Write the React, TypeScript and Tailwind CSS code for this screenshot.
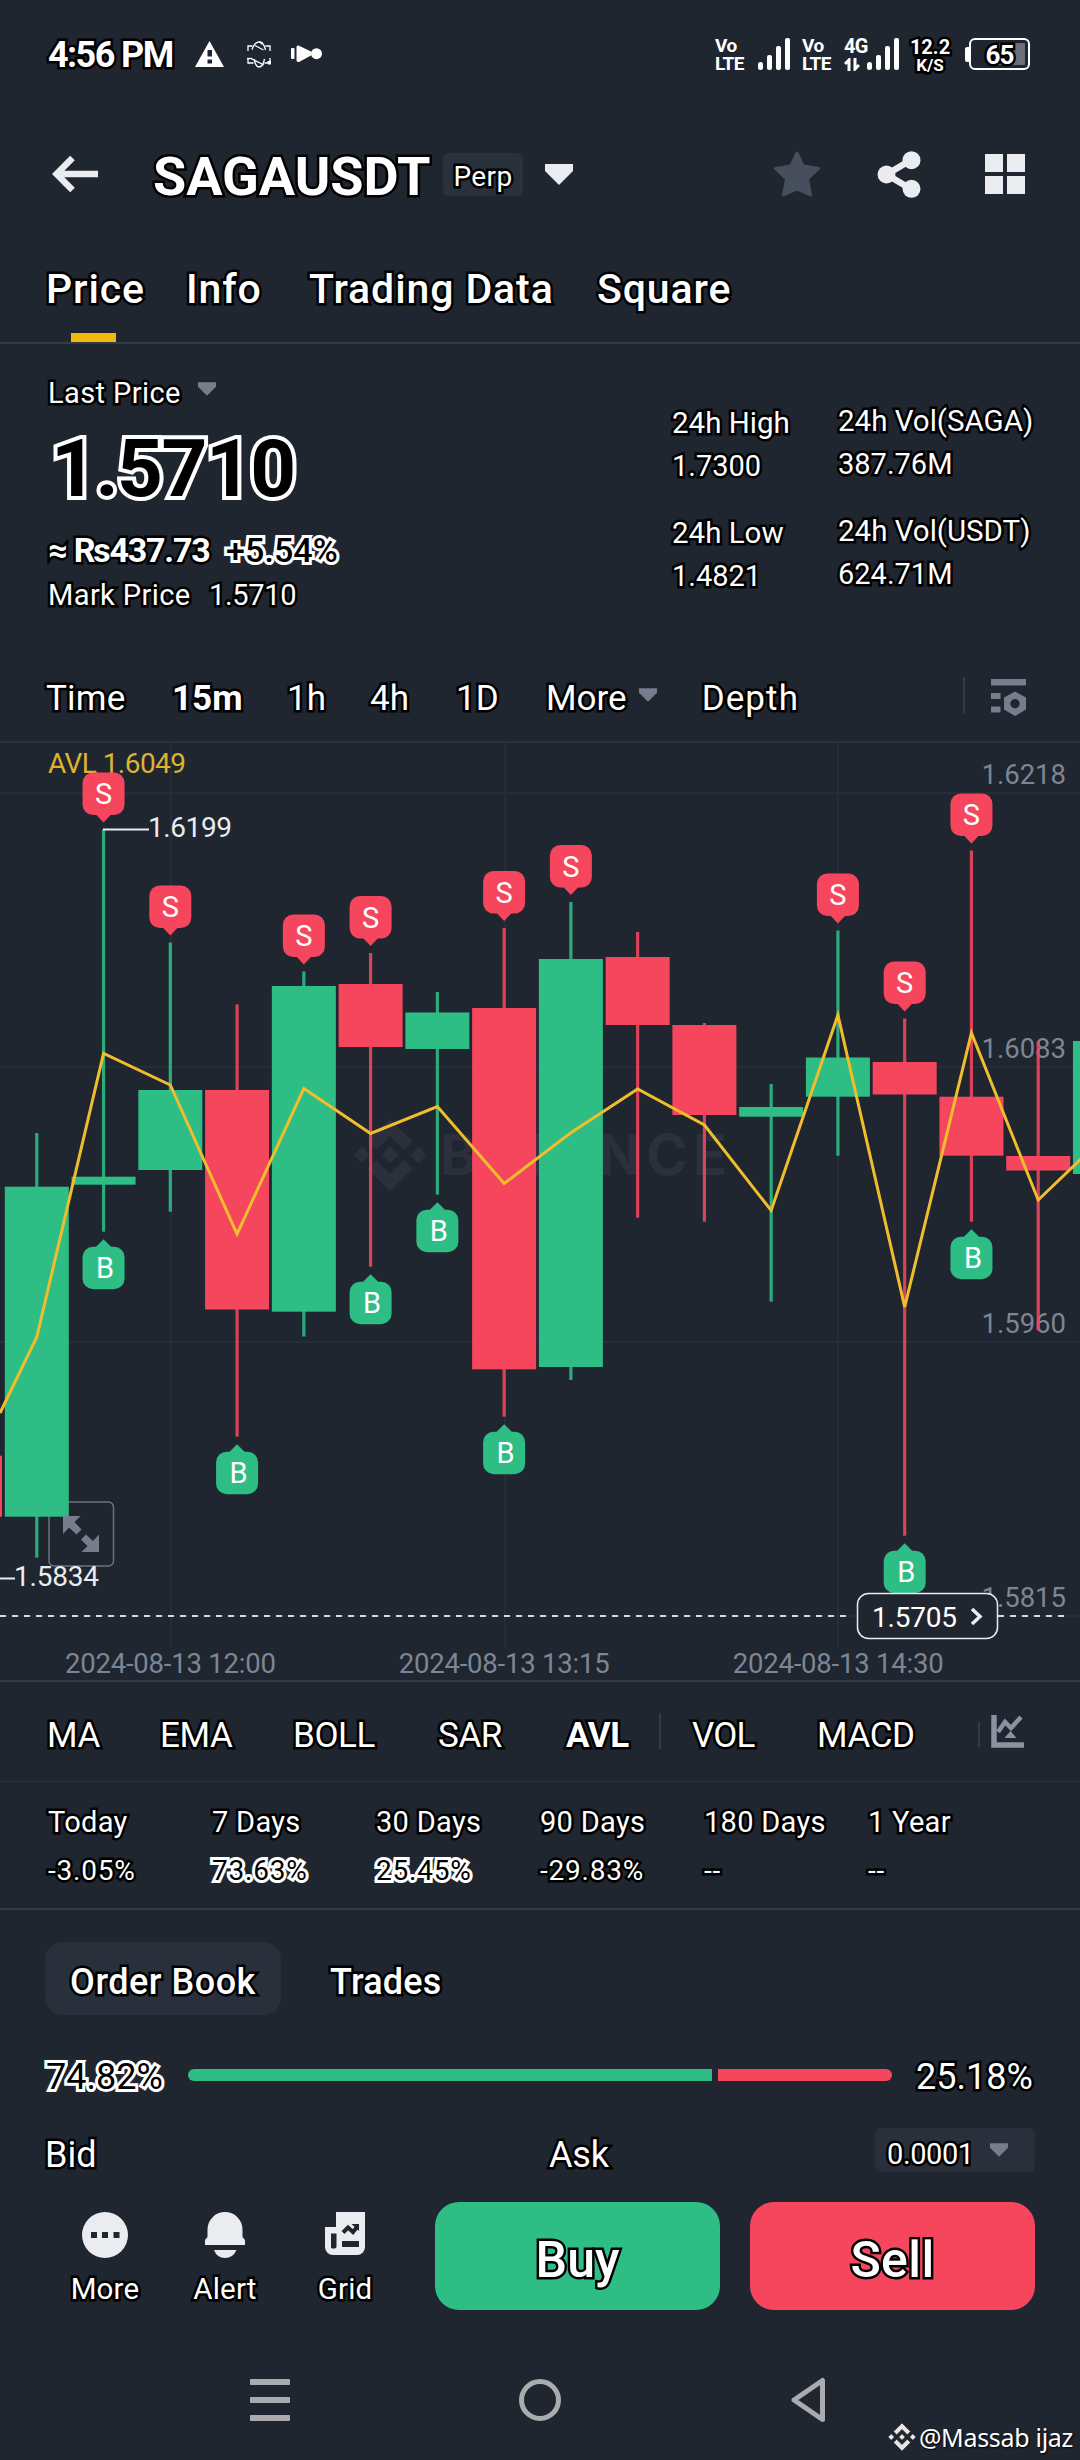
// src/pages/FuturesDetail.tsx
import { clsx } from "clsx";
import type { ReactNode } from "react";

type Candle = {
	high: number;
	top: number;
	bottom: number;
	low: number;
	up: boolean;
	sell?: boolean;
	buy?: boolean;
};

const GREEN = "#2ebd85";
const RED = "#f6465d";

const STEP = 66.76;
const FIRST_X = 36.8;

const candles: Candle[] = [
	{ high: 1133, top: 1186.7, bottom: 1516.7, low: 1557.7, up: true },
	{ high: 829.5, top: 1176.7, bottom: 1184.7, low: 1231.7, up: true, sell: true, buy: true },
	{ high: 942.5, top: 1090, bottom: 1170, low: 1211.7, up: true, sell: true },
	{ high: 1004.3, top: 1090, bottom: 1309.5, low: 1436.7, up: false, buy: true },
	{ high: 971.5, top: 986, bottom: 1311.7, low: 1336.5, up: true, sell: true },
	{ high: 953, top: 984, bottom: 1047, low: 1266.7, up: false, sell: true, buy: true },
	{ high: 992, top: 1012.5, bottom: 1049, low: 1194.7, up: true, buy: true },
	{ high: 928, top: 1008, bottom: 1369.3, low: 1416.7, up: false, sell: true, buy: true },
	{ high: 902, top: 959, bottom: 1367, low: 1380, up: true, sell: true },
	{ high: 932, top: 957, bottom: 1025, low: 1217.7, up: false },
	{ high: 1023, top: 1025, bottom: 1115, low: 1221.7, up: false },
	{ high: 1084, top: 1107, bottom: 1116.7, low: 1301.7, up: true },
	{ high: 930.5, top: 1057.5, bottom: 1096.7, low: 1155.7, up: true, sell: true },
	{ high: 1018.5, top: 1062, bottom: 1094.5, low: 1535.7, up: false, sell: true, buy: true },
	{ high: 850.5, top: 1096.7, bottom: 1155.7, low: 1221.7, up: false, sell: true, buy: true },
	{ high: 1042, top: 1156, bottom: 1170.5, low: 1330.5, up: false },
	{ high: 1041, top: 1041, bottom: 1174, low: 1174, up: true },
];

const avl = [
	1337, 1053.5, 1085, 1234, 1088.5, 1133.5, 1106.5, 1183.5, 1132.7, 1089, 1125,
	1210.5, 1015, 1307, 1033, 1200, 1136,
];

const xAt = (i: number) => FIRST_X + i * STEP;

const OUTLINE = "text-white [-webkit-text-stroke:5px_#000] [paint-order:stroke_fill]";
const OUTLINE_INVERSE = "text-black [-webkit-text-stroke:6px_#fff] [paint-order:stroke_fill]";

const Txt = ({
	children,
	className,
	inverse,
}: {
	children: ReactNode;
	className?: string;
	inverse?: boolean;
}) => (
	<span
		className={clsx(
			"whitespace-nowrap pt-[2px] leading-none",
			inverse ? OUTLINE_INVERSE : OUTLINE,
			className,
		)}
	>
		{children}
	</span>
);

const Caret = ({ className }: { className?: string }) => (
	<svg viewBox="0 0 28 21" fill="currentColor" className={className}>
		<title>open</title>
		<path d="M0 0h28v7L14 21 0 7z" />
	</svg>
);

const SignalBars = ({ className }: { className?: string }) => (
	<svg viewBox="0 0 32 32" className={className} fill="#fff">
		<title>signal</title>
		<rect x="0" y="24" width="5" height="8" rx="2.5" />
		<rect x="9" y="17" width="5" height="15" rx="2" />
		<rect x="18" y="8" width="5" height="24" rx="2" />
		<rect x="27" y="0" width="5" height="32" rx="2" />
	</svg>
);

const VoLte = () => (
	<div className="w-[31px] pt-[2px] text-[19px] font-bold leading-[18px] tracking-[-0.6px] text-white">
		Vo
		<br />
		LTE
	</div>
);

const StatusBar = () => (
	<div className="flex h-[108px] items-center pl-[48px] pr-[50px]">
		<Txt className="w-[147px] text-[36px] font-bold tracking-[-1.6px]">4:56 PM</Txt>
		<svg viewBox="0 0 29 26" className="h-[26px] w-[29px]">
			<title>warning</title>
			<path d="M14.500 0 29 26H0z" fill="#fff" />
			<path d="M12.500 9h4.500v6.500h-4.500zM12.500 18.500h4.500v4h-4.500z" fill="#1f2630" />
		</svg>
		<svg viewBox="0 0 24 27" className="ml-[23px] h-[27px] w-[24px]" fill="none" stroke="#fff" strokeWidth="1.300">
			<title>sync</title>
			<path d="M1 10V5h4.500M23 10V5h-4.500M1 18v4h5.500M23 17v5h-5.500" />
			<path d="M5 8.500C6.500 4 8.500 1 12 1s5.500 3 6.500 8M8 4.500l8.500 4.500M7 18c1 5 2.500 8 5 8s4.500-3 5.500-8M4 17.500l13 6.500" />
			<path d="M11.500 0l4.500 1.500-1 2.500zM20.500 20h3.500v3.500h-3z" fill="#fff" stroke="none" />
			<path d="M0 17.500h5" />
		</svg>
		<svg viewBox="0 0 31 18" className="ml-[20px] h-[18px] w-[31px]" fill="#fff">
			<title>player</title>
			<rect x="0" y="3" width="3.500" height="11" rx="1" />
			<path d="M5.500 2.500Q5.500 0 8 .8L20 6.500v4L8 17Q5.500 17.500 5.500 15z" />
			<circle cx="25.500" cy="8.700" r="5.500" />
		</svg>

		<div className="ml-auto flex items-center">
			<VoLte />
			<SignalBars className="ml-[12px] h-[32px] w-[32px]" />
			<div className="ml-[12px]">
				<VoLte />
			</div>
			<div className="ml-[11px] flex w-[25px] flex-col">
				<span className="text-[20px] font-bold leading-[18px] tracking-[-0.8px] text-white">4G</span>
				<svg viewBox="0 0 16 13" className="mt-[3px] h-[13px] w-[16px]" fill="none" stroke="#fff" strokeWidth="3">
					<title>data</title>
					<path d="M5 13V2L1 6M11 0v11l4-4" />
				</svg>
			</div>
			<SignalBars className="-ml-[2px] h-[32px] w-[32px]" />
			<div className="ml-[8px] flex w-[46px] flex-col items-center">
				<Txt className="text-[20px] font-bold">12.2</Txt>
				<Txt className="-mt-[2px] text-[17px] font-bold">K/S</Txt>
			</div>
			<div className="ml-[12px] h-[15px] w-[4px] rounded-l-[2px] bg-white" />
			<div className="flex h-[32px] w-[61px] items-center rounded-[6px] border-2 border-white bg-linear-to-l from-[#6b6f7b] from-62% to-transparent to-62% bg-clip-content p-[3px]">
				<Txt className="mx-auto text-[26px] font-bold tracking-[-1px]">65</Txt>
			</div>
		</div>
	</div>
);

const Header = () => (
	<div className="flex h-[136px] items-center pl-[52px] pr-[55px] text-[#eaecef]">
		<svg viewBox="0 0 46 36" className="-mt-[4px] h-[36px] w-[46px]" fill="none" stroke="currentColor" strokeWidth="6.500">
			<title>back</title>
			<path d="M20.500 2 4.500 18l16 16M4 18h42" />
		</svg>
		<Txt className="ml-[55px] w-[290px] text-[54px] font-bold">SAGAUSDT</Txt>
		<div className="-mt-[3px] flex h-[43px] w-[80px] items-center justify-center rounded-[6px] bg-[#29313d]">
			<Txt className="mt-[3px] text-[28px] tracking-[0.4px]">Perp</Txt>
		</div>
		<Caret className="ml-[22px] -mt-[4px] h-[21px] w-[28px]" />
		<svg viewBox="0 0 46 46" className="ml-auto -mt-[4px] h-[46px] w-[46px]" fill="#474f5e" stroke="#474f5e" strokeWidth="3" strokeLinejoin="round">
			<title>favorite</title>
			<path d="M23 2l6 13 15.500 2.500-11 10.500 3 16L23 38 9.500 44l3-16L1.500 17.500 17 15z" />
		</svg>
		<svg viewBox="0 0 44 47" className="-mt-[4px] ml-[57px] h-[47px] w-[44px]" fill="currentColor">
			<title>share</title>
			<circle cx="9.500" cy="23.500" r="9" />
			<circle cx="34.500" cy="9.200" r="9" />
			<circle cx="34.500" cy="37.800" r="9" />
			<path d="M34 9 9.500 23.500 34 38" fill="none" stroke="currentColor" strokeWidth="6.500" />
		</svg>
		<div className="-mt-[4px] ml-[64px] grid grid-cols-2 gap-[4px]">
			{[0, 1, 2, 3].map((i) => (
				<div key={i} className="h-[18px] w-[18px] bg-[#eaecef]" />
			))}
		</div>
	</div>
);

const tabs = [
	{ label: "Price", width: "w-[140px]", active: true },
	{ label: "Info", width: "w-[123px]" },
	{ label: "Trading Data", width: "w-[288px]" },
	{ label: "Square", width: "w-[150px]" },
];

const Tabs = () => (
	<div className="flex h-[100px] border-b-2 border-[#343b47] pl-[46px]">
		{tabs.map((tab) => (
			<div key={tab.label} className={tab.width}>
				<div className="flex h-[89px] items-center">
					<Txt className="text-[41px] font-medium tracking-[0.9px]">{tab.label}</Txt>
				</div>
				{tab.active && <div className="ml-[25px] h-[9px] w-[45px] bg-[#f0b90b]" />}
			</div>
		))}
	</div>
);

const Stat = ({ label, value }: { label: string; value: string }) => (
	<div>
		<div className="flex h-[43px] items-center">
			<Txt className="text-[29.500px]">{label}</Txt>
		</div>
		<div className="flex h-[43px] items-center">
			<Txt className="text-[29px]">{value}</Txt>
		</div>
	</div>
);

const PriceSummary = () => (
	<div className="flex h-[309px] pl-[48px]">
		<div className="w-[624px] pt-[26px]">
			<div className="flex h-[44px] items-center">
				<Txt className="text-[29px] tracking-[0.4px]">Last Price</Txt>
				<Caret className="-mt-[6px] ml-[17px] h-[14px] w-[18px] text-[#767d8c]" />
			</div>
			<div className="flex h-[108px] items-center">
				<span className="whitespace-nowrap pl-[3px] pt-[2px] text-[80px] font-bold leading-none tracking-[-1.500px] text-black [-webkit-text-stroke:8px_#fff] [paint-order:stroke_fill]">
					1.5710
				</span>
			</div>
			<div className="flex h-[54px] items-center">
				<Txt className="w-[178px] text-[34px] font-bold tracking-[-1.2px]">≈ ₨437.73</Txt>
				<Txt inverse className="text-[34px] font-medium tracking-[0.1px]">+5.54%</Txt>
			</div>
			<div className="flex h-[37px] items-center">
				<Txt className="w-[161px] text-[29px] tracking-[0.4px]">Mark Price</Txt>
				<Txt className="text-[29px] tracking-[-0.3px]">1.5710</Txt>
			</div>
		</div>
		<div className="flex w-[166px] flex-col gap-[24px] pt-[57px]">
			<Stat label="24h High" value="1.7300" />
			<Stat label="24h Low" value="1.4821" />
		</div>
		<div className="flex flex-col gap-[24px] pt-[55px]">
			<Stat label="24h Vol(SAGA)" value="387.76M" />
			<Stat label="24h Vol(USDT)" value="624.71M" />
		</div>
	</div>
);

const intervals = [
	{ label: "Time", width: "w-[126px]" },
	{ label: "15m", width: "w-[115px]", active: true },
	{ label: "1h", width: "w-[83px]" },
	{ label: "4h", width: "w-[86px]" },
	{ label: "1D", width: "w-[90px]" },
];

const IntervalBar = () => (
	<div className="flex h-[90px] items-center border-b-2 border-[#2b323e] pl-[46px] pr-[54px]">
		{intervals.map((item) => (
			<div key={item.label} className={clsx("flex", item.width)}>
				<Txt className={clsx("text-[35px]", item.active ? "font-bold" : "tracking-[0.2px]")}>
					{item.label}
				</Txt>
			</div>
		))}
		<Txt className="text-[35px]">More</Txt>
		<Caret className="-mt-[4px] ml-[12px] h-[14px] w-[18px] text-[#767d8c]" />
		<Txt className="ml-[45px] text-[35px] tracking-[1.1px]">Depth</Txt>
		<div className="-mt-[4px] ml-auto h-[36px] w-[2px] bg-[#343b47]" />
		<svg viewBox="0 0 35 37" className="ml-[26px] h-[37px] w-[35px]" fill="#767d8c">
			<title>chart settings</title>
			<path d="M0 0h35v6.500H0zM0 14h9.500v6H0zM0 27.500h9.500v6H0z" />
			<path fillRule="evenodd" d="M24 12.500 35 18.500v12L24 37l-11-6.500v-12zM24 20a4.700 4.700 0 1 0 0 9.400 4.700 4.700 0 0 0 0-9.400z" />
		</svg>
	</div>
);

// S 在最高价上方，B 在最低价下方
const Marker = ({ x, y, side }: { x: number; y: number; side: "S" | "B" }) => {
	const sell = side === "S";
	const boxY = sell ? y - 57 : y + 15;
	const tip = sell
		? `M${x - 8} ${y - 15.5}L${x} ${y - 7}L${x + 8} ${y - 15.5}z`
		: `M${x - 8} ${y + 15.5}L${x} ${y + 7.5}L${x + 8} ${y + 15.5}z`;
	return (
		<g fill={sell ? RED : GREEN}>
			<rect x={x - 21} y={boxY} width="42" height="42.500" rx="10.500" />
			<path d={tip} />
			<text x={sell ? x : x + 1.5} y={boxY + 31.5} fontSize="29" fill="#fff" textAnchor="middle">
				{side}
			</text>
		</g>
	);
};

const priceLabels = [
	{ text: "1.6218", y: 784 },
	{ text: "1.6083", y: 1058 },
	{ text: "1.5960", y: 1333 },
	{ text: "1.5815", y: 1607 },
];

const timeLabels = [
	{ text: "2024-08-13 12:00", x: 170.5 },
	{ text: "2024-08-13 13:15", x: 504.2 },
	{ text: "2024-08-13 14:30", x: 838.2 },
];

const CandleChart = () => (
	<div className="h-[939px] border-b-2 border-[#343b47]">
		<svg viewBox="0 743 1080 937" className="block h-[937px] w-[1080px]" fontFamily="Roboto, sans-serif">
			<title>SAGAUSDT 15m</title>
			<g fill="#262d38">
				{[792, 1066, 1341, 1615].map((y) => (
					<rect key={y} x="0" y={y} width="1080" height="2" />
				))}
				{[170, 504, 837].map((x) => (
					<rect key={x} x={x} y="743" width="2" height="904" />
				))}
			</g>

			<g fill="#2b303c">
				<path d="M390 1119l22.500 22.500-8.500 8.500-14-14-14 14-8.500-8.500zM390 1191l22.500-22.500-8.500-8.500-14 14-14-14-8.500 8.500zM390 1146.500l8.500 8.500-8.500 8.500-8.500-8.500zM362 1146.500l8 8.500-8 8.500-8-8.500zM418.500 1146.500l8 8.500-8 8.500-8-8.500z" />
				<text x="440" y="1175" fontSize="56" fontWeight="700" fontFamily="Inter, sans-serif" textLength="287">
					BINANCE
				</text>
			</g>

			<text x="48" y="773" fontSize="28" fill="#deb231" textLength="138">
				AVL 1.6049
			</text>
			<g fontSize="27.500" fill="#7e8593">
				{priceLabels.map((label) => (
					<text key={label.text} x="1066" y={label.y} textAnchor="end">
						{label.text}
					</text>
				))}
				{timeLabels.map((label) => (
					<text key={label.text} x={label.x} y="1673" textAnchor="middle" textLength="211">
						{label.text}
					</text>
				))}
			</g>

			<rect x="49" y="1502" width="64.500" height="64" rx="5" fill="none" stroke="#6c7382" strokeWidth="1.500" />

			<rect x="0" y="1455.700" width="2" height="61" fill={RED} />
			{candles.map((c, i) => {
				const x = xAt(i);
				return (
					<g key={x} fill={c.up ? GREEN : RED}>
						<rect x={x - 1.6} y={c.high} width="3.200" height={c.low - c.high} opacity="0.88" />
						<rect x={x - 32} y={c.top} width="64" height={c.bottom - c.top} />
					</g>
				);
			})}

			<g fill="#767d8c">
				<path d="M63 1516h17.500l-6 6 7 7.500-5 5-7.500-7-6 6.500zM99 1552H81.500l6-6-6.500-6.500 5-5 7 6.500 6-6.500z" />
			</g>

			<polyline
				points={`0,1413 ${avl.map((y, i) => `${xAt(i)},${y}`).join(" ")}`}
				fill="none"
				stroke="#f0bd2d"
				strokeWidth="3"
			/>

			{candles.map((c, i) => (
				<g key={xAt(i)}>
					{c.sell && <Marker x={xAt(i)} y={c.high} side="S" />}
					{c.buy && <Marker x={xAt(i)} y={c.low} side="B" />}
				</g>
			))}

			<g fill="#eaecef" fontSize="28">
				<rect x="103" y="828.500" width="46" height="2" />
				<text x="148" y="837" textLength="84">
					1.6199
				</text>
				<rect x="0" y="1577.500" width="15" height="2" />
				<text x="14" y="1586" textLength="85">
					1.5834
				</text>
			</g>

			<path d="M0 1616H848M998 1616h68" stroke="#d5d8dd" strokeWidth="2" strokeDasharray="6 6" fill="none" />
			<rect x="857.500" y="1593.500" width="140" height="45" rx="11" fill="#1f2630" stroke="#eaecef" strokeWidth="1.500" />
			<text x="872" y="1627" fontSize="28" fill="#fff" textLength="85">
				1.5705
			</text>
			<path d="M972 1609l8 7.500-8 7.500" fill="none" stroke="#eaecef" strokeWidth="3.500" />
		</svg>
	</div>
);

const indicators = [
	{ label: "MA", width: "w-[113px]" },
	{ label: "EMA", width: "w-[133px]" },
	{ label: "BOLL", width: "w-[145px]" },
	{ label: "SAR", width: "w-[128px]" },
	{ label: "AVL", width: "w-[93px]", active: true },
];

const IndicatorBar = () => (
	<div className="flex h-[100px] items-center border-b border-[#2b323e] pl-[47px] pr-[56px] pt-[6px]">
		{indicators.map((item) => (
			<div key={item.label} className={clsx("flex", item.width)}>
				<Txt className={clsx("text-[35px] tracking-[-0.4px]", item.active && "font-bold")}>
					{item.label}
				</Txt>
			</div>
		))}
		<div className="-mt-[7px] h-[36px] w-[2px] bg-[#343b47]" />
		<Txt className="ml-[31px] w-[125px] text-[35px] tracking-[-0.8px]">VOL</Txt>
		<Txt className="text-[35px] tracking-[-0.4px]">MACD</Txt>
		<div className="ml-auto h-[25px] w-[2px] bg-[#343b47]" />
		<svg viewBox="0 0 33 33" className="-mt-[6px] ml-[11px] h-[33px] w-[33px]" fill="none" stroke="#8b92a1">
			<title>indicator settings</title>
			<path d="M3 0v30h30" strokeWidth="5.500" />
			<path d="M7 17l7-10 6 6 10-11" strokeWidth="4.500" />
			<path d="M19.500 16l6 7h-12z" fill="#8b92a1" stroke="none" />
		</svg>
	</div>
);

const performance = [
	{ label: "Today", value: "-3.05%" },
	{ label: "7 Days", value: "73.63%", inverse: true },
	{ label: "30 Days", value: "25.45%", inverse: true },
	{ label: "90 Days", value: "-29.83%" },
	{ label: "180 Days", value: "--" },
	{ label: "1 Year", value: "--" },
];

const Performance = () => (
	<div className="grid h-[128px] grid-cols-[repeat(6,164px)] border-b-2 border-[#343b47] pl-[48px] pt-[17px]">
		{performance.map((item) => (
			<div key={item.label}>
				<div className="flex h-[45px] items-center">
					<Txt className="text-[29px] tracking-[0.3px]">{item.label}</Txt>
				</div>
				<div className="flex h-[52px] items-center">
					<Txt inverse={item.inverse} className="text-[28px] tracking-[0.8px]">
						{item.value}
					</Txt>
				</div>
			</div>
		))}
	</div>
);

const OrderBook = () => (
	<div className="px-[45px] pt-[32px]">
		<div className="flex h-[73px] items-center">
			<div className="flex h-full w-[236px] items-center justify-center rounded-[18px] bg-[#29303c]">
				<Txt className="mt-[5px] text-[36px] font-medium tracking-[0.5px]">Order Book</Txt>
			</div>
			<Txt className="ml-[49px] mt-[5px] text-[36px] font-medium tracking-[0.2px]">Trades</Txt>
		</div>
		<div className="mt-[35px] flex h-[52px] items-center">
			<Txt inverse className="w-[143px] pl-[1px] text-[36px]">74.82%</Txt>
			<div className="-mt-[2px] h-[12px] w-[524px] rounded-l-full bg-[#2ebd85]" />
			<div className="-mt-[2px] ml-[6px] h-[12px] w-[174px] rounded-r-full bg-[#f6465d]" />
			<Txt className="ml-[24px] text-[36px]">25.18%</Txt>
		</div>
		<div className="mt-[26px] flex h-[44px] items-center">
			<Txt className="mt-[8px] w-[504px] text-[36px]">Bid</Txt>
			<Txt className="mt-[8px] text-[36px] tracking-[-0.2px]">Ask</Txt>
			<div className="ml-auto flex h-[44px] w-[160px] items-center rounded-[6px] bg-[#29303c] pl-[12px]">
				<Txt className="mt-[6px] w-[103px] text-[29px] tracking-[-0.4px]">0.0001</Txt>
				<Caret className="h-[14px] w-[18px] text-[#767d8c]" />
			</div>
		</div>
	</div>
);

const MoreIcon = () => (
	<svg viewBox="0 0 46 46" className="h-[46px] w-[46px]">
		<title>more</title>
		<circle cx="23" cy="23" r="23" fill="#eaecef" />
		<path d="M9 20h6v6H9zM20 20h6v6h-6zM31.500 20h6v6h-6z" fill="#1f2630" />
	</svg>
);

const BellIcon = () => (
	<svg viewBox="0 0 40 46" className="h-[46px] w-[40px]" fill="#eaecef">
		<title>alert</title>
		<path d="M2.500 25V17.500a17.500 17.500 0 0 1 35 0V25l2.500 3v5H0v-5zM9 38h22.500q-3.500 8-11.500 8T9 38z" />
	</svg>
);

const GridIcon = () => (
	<svg viewBox="0 0 40 46" className="h-[46px] w-[40px]">
		<title>grid</title>
		<path d="M11 0h29v35a8 8 0 0 1-8 8H8a8 8 0 0 1-8-8V15h11z" fill="#eaecef" />
		<path d="M6 21.500h5.500v13q0 2-3 2t-2.500-2zM17 29h17v6H17z" fill="#1f2630" />
		<path d="M18 20.500l5-5 5 4.500 4-5" fill="none" stroke="#1f2630" strokeWidth="4" />
		<path d="M26.500 12H34v7z" fill="#1f2630" />
	</svg>
);

const actions = [
	{ label: "More", icon: <MoreIcon />, width: "w-[120px]" },
	{ label: "Alert", icon: <BellIcon />, width: "w-[120px]" },
	{ label: "Grid", icon: <GridIcon />, width: "w-[120px]" },
];

const ActionBar = () => (
	<div className="mt-[30px] flex h-[108px] pl-[45px] pr-[45px]">
		<div className="flex w-[390px]">
			{actions.map((item) => (
				<div key={item.label} className={clsx("flex flex-col items-center pt-[10px]", item.width)}>
					{item.icon}
					<Txt className="mt-[15px] text-[29.500px] tracking-[0.2px]">{item.label}</Txt>
				</div>
			))}
		</div>
		<button type="button" className="flex w-[285px] items-center justify-center rounded-[24px] bg-[#2ebd85]">
			<Txt className="mt-[6px] text-[50px] font-medium">Buy</Txt>
		</button>
		<button type="button" className="ml-[30px] flex w-[285px] items-center justify-center rounded-[24px] bg-[#f6465d]">
			<Txt className="mt-[5px] text-[50px] font-medium tracking-[0.4px]">Sell</Txt>
		</button>
	</div>
);

const NavBar = () => (
	<div className="relative flex h-[150px] items-center pl-[250px] pt-[30px]">
		<div className="flex w-[40px] flex-col gap-[12px]">
			<div className="h-[6px] rounded-[1px] bg-[#aaabae]" />
			<div className="h-[6px] rounded-[1px] bg-[#aaabae]" />
			<div className="h-[6px] rounded-[1px] bg-[#aaabae]" />
		</div>
		<div className="ml-[229px] h-[42px] w-[42px] rounded-full border-[5.500px] border-[#aaabae]" />
		<svg viewBox="0 0 36 46" className="ml-[229px] h-[46px] w-[36px]" fill="none" stroke="#aaabae" strokeWidth="5" strokeLinejoin="round">
			<title>back</title>
			<path d="M32.500 3.500v39L4 23z" />
		</svg>
		<div className="absolute bottom-[9px] right-[7px] flex items-center gap-[3px]">
			<svg viewBox="0 0 28 28" className="h-[28px] w-[28px]" fill="#e6e6e6" stroke="#111" strokeWidth="0.500">
				<title>Binance</title>
				<path d="M14 0l8.500 8.500-3.200 3.200L14 6.400l-5.300 5.300-3.200-3.200zM14 28l8.500-8.500-3.200-3.200L14 21.600l-5.300-5.300-3.200 3.200zM14 10.800l3.200 3.200-3.200 3.200-3.200-3.200zM3.200 10.800 6.400 14l-3.200 3.200L0 14zM24.800 10.800 28 14l-3.200 3.200-3.200-3.200z" />
			</svg>
			<span className="whitespace-nowrap font-['Noto_Sans',sans-serif] text-[25px] leading-none tracking-[-0.3px] text-white [text-shadow:1px_1px_2px_#000]">
				@Massab ijaz
			</span>
		</div>
	</div>
);

export default function App() {
	return (
		<div className="h-[2460px] w-[1080px] overflow-hidden bg-[#1f2630] font-[Roboto,sans-serif]">
			<StatusBar />
			<Header />
			<Tabs />
			<PriceSummary />
			<IntervalBar />
			<CandleChart />
			<IndicatorBar />
			<Performance />
			<OrderBook />
			<ActionBar />
			<NavBar />
		</div>
	);
}
